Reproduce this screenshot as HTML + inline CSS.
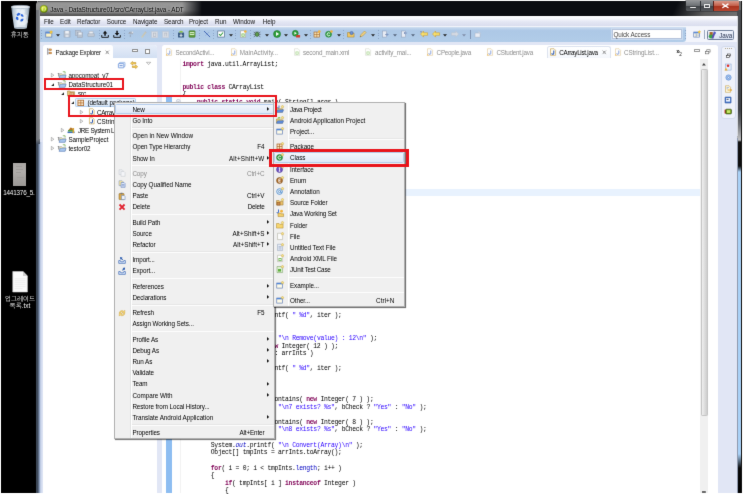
<!DOCTYPE html>
<html><head><meta charset="utf-8"><title>Java - DataStructure01/src/CArrayList.java - ADT</title>
<style>
html,body{margin:0;padding:0}
body{width:743px;height:494px;overflow:hidden;background:#fff;position:relative;font-family:"Liberation Sans","NanumGothic",sans-serif;}
div,span,svg{position:absolute}
svg{overflow:visible}
#root{left:0;top:0;width:743px;height:494px;overflow:hidden;background:#fff;filter:url(#soft)}
.t{white-space:pre;line-height:10px;height:10px;letter-spacing:-.08px}
.c{white-space:pre;line-height:10px;height:10px;font-family:"Liberation Mono",monospace;font-size:6.4px;letter-spacing:-0.30px;color:#000}
.c b,.c i,.c u,.c em{position:static;text-decoration:none}
.c b{color:#7f0055;font-weight:bold}
.c i{color:#2a00ff;font-style:normal}
.c u{color:#0000c0}
.c em{color:#0000c0;font-style:italic}
</style></head><body>
<svg width="0" height="0" style="position:absolute"><defs><filter id="soft" x="0" y="0" width="100%" height="100%" color-interpolation-filters="sRGB"><feConvolveMatrix order="3" kernelMatrix="0.0064 0.0672 0.0064 0.0672 0.7056 0.0672 0.0064 0.0672 0.0064" edgeMode="duplicate" preserveAlpha="true"/></filter></defs></svg>
<div id="root">
<div style="left:1.00px;top:1.00px;width:36.00px;height:492.00px;background:#000"></div>
<svg style="left:10.00px;top:4.00px;" width="21" height="26" viewBox="0 0 21 26"><defs><linearGradient id="rb" x1="0" x2="1"><stop offset="0" stop-color="#5f6d7a"/><stop offset=".12" stop-color="#b9c8d6"/><stop offset=".35" stop-color="#e6eef6"/><stop offset=".7" stop-color="#dbe5ee"/><stop offset=".9" stop-color="#a9b8c6"/><stop offset="1" stop-color="#55626e"/></linearGradient></defs>
<path d="M1.100 3h18.800l-3 20.800q-6.400 1.700-12.800 0z" fill="url(#rb)"/>
<ellipse cx="10.500" cy="3" rx="9.400" ry="1.600" fill="#eef3f8" stroke="#aebccb" stroke-width=".7"/>
<ellipse cx="10.500" cy="24" rx="6.300" ry="1.100" fill="#9eacb9"/>
<path d="M12 5l3 2-1 3 3 1-1 4 2 3-3 3H9l-2-4 2-3-2-4 3-2z" fill="#f4f8fc" opacity=".55"/>
<path d="M6.500 10.500l1.800-1.800 2.200.8-1 1.800-2.200.7zM10.800 10l2 .4 1 2-1.800.4-1.300-1.200zM13.600 14.800l-.7 2.200-2.200.8-.4-1.700 1.600-1.300zM6.200 12.800l1.800.2.600 2.400-1.500.9-1.300-1.700z" fill="#2c66dc"/></svg>
<span class="t" style="left:10.80px;top:30.40px;font-size:6.4px;color:#f0f0f0;;letter-spacing:0.023px">휴지통</span>
<div style="left:13.00px;top:163.00px;width:13.10px;height:22.90px;background:linear-gradient(180deg,#a9a6a3,#b0adaa 40%,#a3a09d 75%,#9b9895)"></div>
<div style="left:15.50px;top:166.00px;width:6.00px;height:0.50px;background:#9f9c99"></div>
<div style="left:15.50px;top:169.00px;width:7.50px;height:0.50px;background:#a09d9a"></div>
<div style="left:15.50px;top:172.00px;width:5.00px;height:0.50px;background:#a09d9a"></div>
<div style="left:17.00px;top:177.00px;width:6.50px;height:0.50px;background:#a09d9a"></div>
<span class="t" style="left:3.20px;top:188.10px;font-size:6.3px;color:#f4f4f4;;letter-spacing:-0.178px">1441376_5.</span>
<svg style="left:12.10px;top:271.10px;" width="16.2" height="21.5" viewBox="0 0 16 22"><path d="M.5.500h10.500l4.500 4.500V21.500H.5z" fill="#fbfbfb" stroke="#cfcfcf" stroke-width=".6"/><path d="M11 .5v4.500h4.500z" fill="#d0d0d0"/><path d="M2.500 8h11M2.500 10h11M2.500 12h11M2.500 14h11M2.500 16h11M2.500 18h8" stroke="#e2e2e2" stroke-width=".5"/></svg>
<span class="t" style="left:5.00px;top:294.00px;font-size:6.4px;color:#f4f4f4;;letter-spacing:-0.009px">업그레이드</span>
<span class="t" style="left:9.60px;top:301.20px;font-size:6.4px;color:#f4f4f4;;letter-spacing:0.042px">목록.txt</span>
<div style="left:36.00px;top:1.30px;width:706.00px;height:14.60px;background:#0a0c11;border-top-left-radius:3.500px;border-top-right-radius:3.500px"></div>
<div style="left:36.00px;top:1.30px;width:166.00px;height:14.60px;background:linear-gradient(180deg,#3a3a3a 0,#8c8c8c 9%,#989898 20%,#8e8e8e 62%,#6c6c6c 80%,#4c4c4c 100%);-webkit-mask-image:linear-gradient(90deg,#000 0,#000 88%,transparent 100%);border-top-left-radius:3.500px"></div>
<div style="left:648.00px;top:1.30px;width:94.00px;height:14.60px;background:linear-gradient(115deg,rgba(110,110,110,0) 0,rgba(110,110,110,0) 30%,#5c5c5c 62%,#727272 100%);border-top-right-radius:3.500px"></div>
<div style="left:36.00px;top:10.00px;width:4.00px;height:133.00px;background:linear-gradient(90deg,#6f7277 0,#777a7f 60%,#9ea1a6 100%)"></div>
<div style="left:36.00px;top:142.00px;width:4.00px;height:351.00px;background:linear-gradient(90deg,#3a4554 0,#404b5b 50%,#7486a4 72%,#a3b4d2 100%)"></div>
<div style="left:36.00px;top:139.00px;width:4.00px;height:5.00px;background:linear-gradient(180deg,#777a7f,#3f4a5a)"></div>
<div style="left:737.20px;top:10.00px;width:4.80px;height:483.00px;background:linear-gradient(180deg,#4a4d51 0,#3f4246 100px,#6a6c70 114px,#a2a3a6 124px,#c0c1c3 130px,#111 132px,#0c0c0c 156px,#a9d1f7 162px,#a9d1f7 444px,#0a0a0a 458px,#000 483px)"></div>
<div style="left:736.90px;top:16.00px;width:0.90px;height:120.00px;background:#d6d9df"></div>
<div style="left:736.50px;top:138.00px;width:0.80px;height:355.00px;background:#8f9aaf"></div>
<div style="left:741.20px;top:1.00px;width:0.90px;height:492.00px;background:#111"></div>
<svg style="left:40.20px;top:4.60px;" width="7.8" height="7.8" viewBox="0 0 16 16"><defs><radialGradient id="ag" cx=".4" cy=".35" r=".7"><stop offset="0" stop-color="#e6f04a"/><stop offset=".6" stop-color="#a8c81a"/><stop offset="1" stop-color="#5f7f0a"/></radialGradient></defs><circle cx="8" cy="8" r="7.600" fill="url(#ag)" stroke="#4a5f0a" stroke-width=".8"/><path d="M6.500 4c-1.500 0-1 3-2.500 4 1.500 1 1 4 2.500 4M9.500 4c1.500 0 1 3 2.500 4-1.500 1-1 4-2.500 4" fill="none" stroke="#fff" stroke-width="1.300"/></svg>
<span class="t" style="left:50.30px;top:4.50px;font-size:6.3px;color:#000;text-shadow:0 0 2px #c4c4c4,0 0 3px #b4b4b4,0 0 4px #a4a4a4">Java - DataStructure01/src/CArrayList.java - ADT</span>
<div style="left:685.80px;top:1.30px;width:52.30px;height:9.30px;border-radius:0 0 2.500px 2.500px;background:#6d7074;box-shadow:0 0 0 .6px #2a2c30"></div>
<div style="left:685.80px;top:1.30px;width:14.60px;height:9.30px;border-radius:0 0 0 2.500px;background:linear-gradient(180deg,#8e9194 0,#6e7175 45%,#3f4246 50%,#55585c 100%)"></div>
<div style="left:700.40px;top:1.30px;width:13.00px;height:9.30px;background:linear-gradient(180deg,#8e9194 0,#6e7175 45%,#3f4246 50%,#55585c 100%);border-left:.6px solid #2f3135"></div>
<div style="left:713.40px;top:1.30px;width:24.70px;height:9.30px;border-radius:0 0 2.500px 0;background:linear-gradient(180deg,#d99a8a 0,#c4614c 45%,#a8331e 50%,#b9452e 100%);border-left:.6px solid #5a2018"></div>
<div style="left:689.80px;top:6.60px;width:6.20px;height:1.90px;background:#f4f4f4;border-radius:.5px;box-shadow:0 0 .8px #222"></div>
<div style="left:704.20px;top:3.80px;width:5.60px;height:4.20px;border:1.100px solid #f4f4f4;border-radius:.5px;box-sizing:border-box;box-shadow:0 0 .8px #222"></div>
<svg style="left:722.20px;top:3.20px;" width="6.8" height="5.6" viewBox="0 0 12 8"><path d="M1.500 1l9 6M10.500 1l-9 6" stroke="#fff" stroke-width="2.600" stroke-linecap="round"/></svg>
<div style="left:39.70px;top:15.80px;width:697.60px;height:477.20px;background:#e1e6f5"></div>
<div style="left:40.00px;top:142.00px;width:3.00px;height:351.00px;background:linear-gradient(90deg,#b7c5df,#d3dcef 50%,#e1e6f5)"></div>
<div style="left:39.70px;top:15.60px;width:697.60px;height:10.20px;background:linear-gradient(180deg,#fdfdff 0,#f6f7fc 25%,#e3e6f3 60%,#d9ddee 100%)"></div>
<span class="t" style="left:43.90px;top:17.20px;font-size:6.3px;color:#111;">File</span>
<span class="t" style="left:60.10px;top:17.20px;font-size:6.3px;color:#111;">Edit</span>
<span class="t" style="left:77.10px;top:17.20px;font-size:6.3px;color:#111;">Refactor</span>
<span class="t" style="left:106.80px;top:17.20px;font-size:6.3px;color:#111;">Source</span>
<span class="t" style="left:133.10px;top:17.20px;font-size:6.3px;color:#111;">Navigate</span>
<span class="t" style="left:164.00px;top:17.20px;font-size:6.3px;color:#111;">Search</span>
<span class="t" style="left:188.90px;top:17.20px;font-size:6.3px;color:#111;">Project</span>
<span class="t" style="left:215.10px;top:17.20px;font-size:6.3px;color:#111;">Run</span>
<span class="t" style="left:233.10px;top:17.20px;font-size:6.3px;color:#111;">Window</span>
<span class="t" style="left:262.70px;top:17.20px;font-size:6.3px;color:#111;">Help</span>
<div style="left:39.70px;top:25.80px;width:697.60px;height:16.40px;background:#f3f5fc"></div>
<div style="left:39.70px;top:25.80px;width:646.60px;height:16.40px;background:linear-gradient(180deg,#e3ecf7 0,#bcd2eb 16%,#adc8e6 30%,#b1cce8 100%);border-bottom-right-radius:3px"></div>
<div style="left:39.70px;top:25.50px;width:697.60px;height:0.80px;background:#f1f4fa"></div>
<div style="left:41.20px;top:30.30px;width:0.80px;height:1.00px;background:#8ea6c8"></div>
<div style="left:41.20px;top:32.70px;width:0.80px;height:1.00px;background:#8ea6c8"></div>
<div style="left:41.20px;top:35.10px;width:0.80px;height:1.00px;background:#8ea6c8"></div>
<div style="left:41.20px;top:37.50px;width:0.80px;height:1.00px;background:#8ea6c8"></div>
<svg style="left:44.75px;top:30.45px;" width="8.1" height="8.1" viewBox="0 0 16 16"><rect x="1.5" y="4" width="12" height="10" fill="#fdf3c4" stroke="#5b79b5" stroke-width="1.4"/><rect x="1.5" y="4" width="12" height="3" fill="#5b8bd8"/><path d="M12 0l1.2 2.6 2.8.4-2 2 .5 2.8L12 6.5 9.5 7.8l.5-2.8-2-2 2.8-.4z" fill="#f5c43a"/></svg>
<svg style="left:54.20px;top:30.60px;" width="8" height="8" viewBox="0 0 16 16"><path d="M4 6.5h8l-4 4.5z" fill="#222"/></svg>
<svg style="left:63.45px;top:30.45px;" width="8.1" height="8.1" viewBox="0 0 16 16"><rect x="2" y="2" width="12" height="12" fill="#b9c2cf" stroke="#9aa5b6"/><rect x="4.5" y="2" width="7" height="5" fill="#eef1f5"/><rect x="5" y="9.5" width="6" height="4.5" fill="#dde2e9"/></svg>
<svg style="left:75.35px;top:30.45px;" width="8.1" height="8.1" viewBox="0 0 16 16"><rect x="1" y="1" width="10" height="10" fill="#bcc5d1" stroke="#9aa5b6"/><rect x="5" y="5" width="10" height="10" fill="#b9c2cf" stroke="#9aa5b6"/><rect x="7" y="5" width="6" height="4" fill="#eef1f5"/></svg>
<svg style="left:87.25px;top:30.45px;" width="8.1" height="8.1" viewBox="0 0 16 16"><rect x="1.5" y="7" width="13" height="6" rx="1" fill="#c2cad5" stroke="#9aa5b6"/><rect x="4" y="2.5" width="8" height="5" fill="#eceff4" stroke="#a9b2c0"/></svg>
<div style="left:98.80px;top:30.30px;width:0.80px;height:1.00px;background:#8ea6c8"></div>
<div style="left:98.80px;top:32.70px;width:0.80px;height:1.00px;background:#8ea6c8"></div>
<div style="left:98.80px;top:35.10px;width:0.80px;height:1.00px;background:#8ea6c8"></div>
<div style="left:98.80px;top:37.50px;width:0.80px;height:1.00px;background:#8ea6c8"></div>
<svg style="left:101.35px;top:30.45px;" width="8.1" height="8.1" viewBox="0 0 16 16"><path d="M8 1.5L3.5 7h3v4.5h3V7h3z" fill="#111"/><path d="M1.5 10v4.5h13V10" fill="none" stroke="#111" stroke-width="1.8"/></svg>
<svg style="left:112.85px;top:30.45px;" width="8.1" height="8.1" viewBox="0 0 16 16"><path d="M8 11.5L3.5 6h3V1.5h3V6h3z" fill="#111"/><path d="M1.5 10v4.5h13V10" fill="none" stroke="#111" stroke-width="1.8"/></svg>
<div style="left:123.90px;top:30.30px;width:0.80px;height:1.00px;background:#8ea6c8"></div>
<div style="left:123.90px;top:32.70px;width:0.80px;height:1.00px;background:#8ea6c8"></div>
<div style="left:123.90px;top:35.10px;width:0.80px;height:1.00px;background:#8ea6c8"></div>
<div style="left:123.90px;top:37.50px;width:0.80px;height:1.00px;background:#8ea6c8"></div>
<svg style="left:127.25px;top:30.45px;" width="8.1" height="8.1" viewBox="0 0 16 16"><path d="M2 8l4-5 7 1-2 5-5-1z" fill="#aab3c0"/><path d="M4 5l3 1M6.500 9v5" stroke="#8f99a8" stroke-width="1.400"/><circle cx="11" cy="4.500" r="1.600" fill="#e4e8ee"/></svg>
<svg style="left:139.75px;top:30.45px;" width="8.1" height="8.1" viewBox="0 0 16 16"><path d="M3 13l7-10 3 2-7 9z" fill="#c9c6b4"/><path d="M3 13.500l2.500 1" stroke="#d9cfa8" stroke-width="2"/><path d="M10 3l3 2" stroke="#b4b9c4" stroke-width="1.600"/></svg>
<svg style="left:150.70px;top:30.80px;" width="7.4" height="7.4" viewBox="0 0 16 16"><rect x="1.5" y="1.5" width="13" height="13" fill="#d9dde4" stroke="#c2c8d2"/><rect x="5.5" y="4.5" width="5" height="7" fill="none" stroke="#aeb5c1" stroke-width="1.3"/></svg>
<svg style="left:162.30px;top:30.80px;" width="7.4" height="7.4" viewBox="0 0 16 16"><rect x="1.5" y="1.5" width="13" height="13" fill="#d9dde4" stroke="#c2c8d2"/><path d="M6 4.5v7M10 4.5v7M5 4.5h6" fill="none" stroke="#aeb5c1" stroke-width="1.3"/></svg>
<div style="left:173.00px;top:30.30px;width:0.80px;height:1.00px;background:#8ea6c8"></div>
<div style="left:173.00px;top:32.70px;width:0.80px;height:1.00px;background:#8ea6c8"></div>
<div style="left:173.00px;top:35.10px;width:0.80px;height:1.00px;background:#8ea6c8"></div>
<div style="left:173.00px;top:37.50px;width:0.80px;height:1.00px;background:#8ea6c8"></div>
<svg style="left:176.55px;top:30.45px;" width="8.1" height="8.1" viewBox="0 0 16 16"><rect x="2" y="5" width="12" height="10" rx="1" fill="#3b5d84"/><path d="M4 5a4 3.6 0 0 1 8 0z" fill="#8fc44a"/><path d="M8 7v5M5.5 10L8 12.8 10.5 10" fill="none" stroke="#fff" stroke-width="1.8"/></svg>
<svg style="left:188.45px;top:30.45px;" width="8.1" height="8.1" viewBox="0 0 16 16"><rect x="2" y="1.5" width="12" height="13" rx="1.5" fill="#5e9b3a" stroke="#3c6e25"/><rect x="3.5" y="4" width="9" height="6" fill="#d7ecc6"/><rect x="4.5" y="6" width="7" height="1.6" fill="#5e9b3a"/></svg>
<div style="left:199.40px;top:30.30px;width:0.80px;height:1.00px;background:#8ea6c8"></div>
<div style="left:199.40px;top:32.70px;width:0.80px;height:1.00px;background:#8ea6c8"></div>
<div style="left:199.40px;top:35.10px;width:0.80px;height:1.00px;background:#8ea6c8"></div>
<div style="left:199.40px;top:37.50px;width:0.80px;height:1.00px;background:#8ea6c8"></div>
<svg style="left:202.95px;top:30.45px;" width="8.1" height="8.1" viewBox="0 0 16 16"><path d="M2 2l12 12" stroke="#2a4fa8" stroke-width="1.6"/><path d="M5 11l7-7" stroke="#7fa0dc" stroke-width="1.3"/></svg>
<div style="left:213.10px;top:30.30px;width:0.80px;height:1.00px;background:#8ea6c8"></div>
<div style="left:213.10px;top:32.70px;width:0.80px;height:1.00px;background:#8ea6c8"></div>
<div style="left:213.10px;top:35.10px;width:0.80px;height:1.00px;background:#8ea6c8"></div>
<div style="left:213.10px;top:37.50px;width:0.80px;height:1.00px;background:#8ea6c8"></div>
<svg style="left:217.15px;top:30.45px;" width="8.1" height="8.1" viewBox="0 0 16 16"><rect x="1.5" y="2" width="13" height="12" fill="#fff" stroke="#54708f" stroke-width="1.4"/><path d="M4 8l3 3 5-6" fill="none" stroke="#2e9a3a" stroke-width="2"/></svg>
<svg style="left:226.70px;top:30.60px;" width="8" height="8" viewBox="0 0 16 16"><path d="M4 6.5h8l-4 4.5z" fill="#222"/></svg>
<div style="left:235.00px;top:30.30px;width:0.80px;height:1.00px;background:#8ea6c8"></div>
<div style="left:235.00px;top:32.70px;width:0.80px;height:1.00px;background:#8ea6c8"></div>
<div style="left:235.00px;top:35.10px;width:0.80px;height:1.00px;background:#8ea6c8"></div>
<div style="left:235.00px;top:37.50px;width:0.80px;height:1.00px;background:#8ea6c8"></div>
<svg style="left:239.25px;top:30.45px;" width="8.1" height="8.1" viewBox="0 0 16 16"><path d="M3 1.5h7l3 3V14.5H3z" fill="#fff" stroke="#9a9a8a"/><rect x="5" y="7" width="6" height="6" fill="#6fb648"/><rect x="6.5" y="8.5" width="3" height="3" fill="#fff"/><circle cx="12.5" cy="3" r="2.6" fill="#f3b33c"/></svg>
<div style="left:249.50px;top:30.30px;width:0.80px;height:1.00px;background:#8ea6c8"></div>
<div style="left:249.50px;top:32.70px;width:0.80px;height:1.00px;background:#8ea6c8"></div>
<div style="left:249.50px;top:35.10px;width:0.80px;height:1.00px;background:#8ea6c8"></div>
<div style="left:249.50px;top:37.50px;width:0.80px;height:1.00px;background:#8ea6c8"></div>
<svg style="left:253.45px;top:30.45px;" width="8.1" height="8.1" viewBox="0 0 16 16"><ellipse cx="8" cy="8.5" rx="3.6" ry="4.4" fill="#5d9a4a" stroke="#2e5a2a"/><path d="M1.5 4l3.5 2.5M14.5 4L11 6.5M1 8.5h3.5M15 8.5h-3.5M1.5 13.5L5 11M14.5 13.5L11 11M6 3l1 1.5M10 3L9 4.5" stroke="#333" stroke-width="1.1"/></svg>
<svg style="left:262.70px;top:30.60px;" width="8" height="8" viewBox="0 0 16 16"><path d="M4 6.5h8l-4 4.5z" fill="#222"/></svg>
<svg style="left:272.55px;top:30.45px;" width="8.1" height="8.1" viewBox="0 0 16 16"><circle cx="8" cy="8" r="7" fill="#2f9e3a" stroke="#1c6e28"/><path d="M6 4l6 4-6 4z" fill="#fff"/></svg>
<svg style="left:282.20px;top:30.60px;" width="8" height="8" viewBox="0 0 16 16"><path d="M4 6.5h8l-4 4.5z" fill="#222"/></svg>
<svg style="left:292.15px;top:30.45px;" width="8.1" height="8.1" viewBox="0 0 16 16"><circle cx="6.5" cy="6.5" r="5.8" fill="#2f9e3a" stroke="#1c6e28"/><path d="M4.8 3.5l4.6 3-4.6 3z" fill="#fff"/><rect x="8" y="10" width="8" height="5" rx="1" fill="#d23b2a"/></svg>
<svg style="left:301.50px;top:30.60px;" width="8" height="8" viewBox="0 0 16 16"><path d="M4 6.5h8l-4 4.5z" fill="#222"/></svg>
<div style="left:310.10px;top:30.30px;width:0.80px;height:1.00px;background:#8ea6c8"></div>
<div style="left:310.10px;top:32.70px;width:0.80px;height:1.00px;background:#8ea6c8"></div>
<div style="left:310.10px;top:35.10px;width:0.80px;height:1.00px;background:#8ea6c8"></div>
<div style="left:310.10px;top:37.50px;width:0.80px;height:1.00px;background:#8ea6c8"></div>
<svg style="left:313.45px;top:30.45px;" width="8.1" height="8.1" viewBox="0 0 16 16"><rect x="2" y="4" width="11" height="10" fill="#f6dfb0" stroke="#a86a2a" stroke-width="1.3"/><path d="M7.5 4v10M2 9h11" stroke="#a86a2a" stroke-width="1.2"/><circle cx="12.5" cy="3.2" r="2.6" fill="#f3b33c"/></svg>
<svg style="left:325.25px;top:30.45px;" width="8.1" height="8.1" viewBox="0 0 16 16"><circle cx="7" cy="8.5" r="6" fill="#3aa34a" stroke="#1f7a30"/><path d="M9.6 6.6a3 3 0 1 0 0 3.8" fill="none" stroke="#fff" stroke-width="1.7"/><circle cx="12.8" cy="3" r="2.5" fill="#f3b33c"/></svg>
<svg style="left:334.80px;top:30.60px;" width="8" height="8" viewBox="0 0 16 16"><path d="M4 6.5h8l-4 4.5z" fill="#222"/></svg>
<div style="left:343.40px;top:30.30px;width:0.80px;height:1.00px;background:#8ea6c8"></div>
<div style="left:343.40px;top:32.70px;width:0.80px;height:1.00px;background:#8ea6c8"></div>
<div style="left:343.40px;top:35.10px;width:0.80px;height:1.00px;background:#8ea6c8"></div>
<div style="left:343.40px;top:37.50px;width:0.80px;height:1.00px;background:#8ea6c8"></div>
<svg style="left:347.25px;top:30.45px;" width="8.1" height="8.1" viewBox="0 0 16 16"><path d="M1 5h5l1.5 1.5H14V14H1z" fill="#f0c765" stroke="#a8812a"/><circle cx="9" cy="6" r="3.2" fill="#6d8fd0" stroke="#3d5fa0"/></svg>
<svg style="left:359.35px;top:30.45px;" width="8.1" height="8.1" viewBox="0 0 16 16"><path d="M2 14l2-5 7-7 3 3-7 7z" fill="#f0d080" stroke="#b08a30"/><path d="M2 14l2-1-1-1z" fill="#444"/></svg>
<svg style="left:368.70px;top:30.60px;" width="8" height="8" viewBox="0 0 16 16"><path d="M4 6.5h8l-4 4.5z" fill="#222"/></svg>
<div style="left:377.60px;top:30.30px;width:0.80px;height:1.00px;background:#8ea6c8"></div>
<div style="left:377.60px;top:32.70px;width:0.80px;height:1.00px;background:#8ea6c8"></div>
<div style="left:377.60px;top:35.10px;width:0.80px;height:1.00px;background:#8ea6c8"></div>
<div style="left:377.60px;top:37.50px;width:0.80px;height:1.00px;background:#8ea6c8"></div>
<svg style="left:381.15px;top:30.45px;" width="8.1" height="8.1" viewBox="0 0 16 16"><rect x="3" y="2" width="8" height="12" fill="#e8ecf4" stroke="#8d9bb5"/><path d="M8 9h6M11.5 6.5L14 9l-2.500 2.500" fill="none" stroke="#6d86b8" stroke-width="1.4"/></svg>
<svg style="left:390.60px;top:30.60px;" width="8" height="8" viewBox="0 0 16 16"><path d="M4 6.500h8l-4 4.500z" fill="#56647c"/></svg>
<svg style="left:400.45px;top:30.45px;" width="8.1" height="8.1" viewBox="0 0 16 16"><rect x="3" y="2" width="8" height="12" fill="#e8ecf4" stroke="#8d9bb5"/><path d="M14 6H8M10.5 3.500L8 6l2.500 2.500" fill="none" stroke="#6d86b8" stroke-width="1.4"/></svg>
<svg style="left:409.40px;top:30.60px;" width="8" height="8" viewBox="0 0 16 16"><path d="M4 6.500h8l-4 4.500z" fill="#56647c"/></svg>
<svg style="left:419.55px;top:30.45px;" width="8.1" height="8.1" viewBox="0 0 16 16"><path d="M1 8l6-6v3.500h8v5H7V14z" fill="#f9e06c" stroke="#c8962a"/><path d="M2 2v3M.5 3.500h3" stroke="#5a6a90" stroke-width=".8"/></svg>
<svg style="left:431.55px;top:30.45px;" width="8.1" height="8.1" viewBox="0 0 16 16"><path d="M1 8l6-6v3.500h8v5H7V14z" fill="#f9e06c" stroke="#c8962a"/></svg>
<svg style="left:440.70px;top:30.60px;" width="8" height="8" viewBox="0 0 16 16"><path d="M4 6.5h8l-4 4.5z" fill="#222"/></svg>
<svg style="left:450.95px;top:30.45px;" width="8.1" height="8.1" viewBox="0 0 16 16"><path d="M15 8L9 2v3.500H1v5h8V14z" fill="#d6dbe4" stroke="#bcc3cf"/></svg>
<svg style="left:460.20px;top:30.60px;" width="8" height="8" viewBox="0 0 16 16"><path d="M4 6.500h8l-4 4.500z" fill="#7f8da8"/></svg>
<div style="left:469.50px;top:29.80px;width:0.70px;height:9.60px;background:#7f93b3"></div>
<svg style="left:473.75px;top:30.45px;" width="8.1" height="8.1" viewBox="0 0 16 16"><rect x="2" y="6" width="10" height="8" fill="#e9edf5" stroke="#aab3c4"/><path d="M9 2l5 5-3 0-3-3z" fill="#c7cedb"/></svg>
<div style="left:611.50px;top:29.40px;width:70.20px;height:9.80px;background:#fff;border:.7px solid #b5c4dc;box-sizing:border-box;box-shadow:0 0 0 1px #c9daef"></div>
<span class="t" style="left:613.40px;top:30.10px;font-size:6.3px;color:#444;">Quick Access</span>
<div style="left:684.50px;top:30.30px;width:0.80px;height:1.00px;background:#8ea6c8"></div>
<div style="left:684.50px;top:32.70px;width:0.80px;height:1.00px;background:#8ea6c8"></div>
<div style="left:684.50px;top:35.10px;width:0.80px;height:1.00px;background:#8ea6c8"></div>
<div style="left:684.50px;top:37.50px;width:0.80px;height:1.00px;background:#8ea6c8"></div>
<svg style="left:692.85px;top:30.45px;" width="8.1" height="8.1" viewBox="0 0 16 16"><rect x="1.5" y="4" width="11" height="10" fill="#fffbe6" stroke="#5b79b5" stroke-width="1.3"/><rect x="1.5" y="4" width="11" height="2.600" fill="#5b8bd8"/><path d="M6 6.500v7.500M6 10h6.500" stroke="#5b79b5"/><path d="M12.500 0l1.100 2.300 2.400.4-1.800 1.800.4 2.500-2.100-1.200-2.200 1.200.4-2.500L9 2.700l2.400-.4z" fill="#f5c43a"/></svg>
<div style="left:703.60px;top:30.00px;width:0.70px;height:9.40px;background:#9aa6bd"></div>
<div style="left:706.60px;top:29.90px;width:27.00px;height:10.10px;border:.8px solid #6f7f9a;border-radius:1.500px;box-sizing:border-box;background:linear-gradient(180deg,#eef2fb,#d9e2f3)"></div>
<svg style="left:708.30px;top:30.60px;" width="8.4" height="8.4" viewBox="0 0 16 16"><circle cx="6" cy="10" r="4.500" fill="#3aa34a"/><rect x="3" y="2" width="6" height="5" fill="#a8632a"/><path d="M11 1l4 1-5 13-3-1z" fill="#5e4bb4"/><path d="M12 2.500c2 0 2.500 2 1 4" fill="none" stroke="#3b6fd0" stroke-width="1.600"/></svg>
<span class="t" style="left:719.30px;top:30.50px;font-size:6.3px;color:#2a3550;">Java</span>
<div style="left:43.00px;top:45.00px;width:114.00px;height:448.00px;background:#fff;border-radius:2.5px 2.5px 0 0"></div>
<div style="left:43.00px;top:45.00px;width:114.00px;height:13.00px;background:linear-gradient(180deg,#e6edf9,#d2dff2);border-radius:2.5px 2.5px 0 0"></div>
<div style="left:43.00px;top:45.00px;width:70.00px;height:13.00px;background:#fff;border-radius:2.5px 2.5px 0 0"></div>
<svg style="left:47.00px;top:48.30px;" width="5.2" height="6.8" viewBox="0 0 11 15"><path d="M1.500 0v15" stroke="#4a4a5a" stroke-width="1.400"/><path d="M1.500 4h3M1.500 11h3" stroke="#4a4a5a" stroke-width="1"/><rect x="4.500" y="2" width="5.500" height="4" fill="#d9a05a" stroke="#a8682a" stroke-width=".8"/><rect x="4.500" y="9" width="5.500" height="4" fill="#d9a05a" stroke="#a8682a" stroke-width=".8"/></svg>
<span class="t" style="left:55.60px;top:47.50px;font-size:6.3px;color:#111;;letter-spacing:-0.275px">Package Explorer</span>
<svg style="left:105.00px;top:49.50px;" width="4.6" height="4.6" viewBox="0 0 10 10"><path d="M1 1l2.500 2.500h3L9 1M1 9l2.500-2.500h3L9 9M3.500 3.500v3M6.500 3.500v3" fill="none" stroke="#555" stroke-width="1"/></svg>
<div style="left:132.40px;top:49.40px;width:6.00px;height:2.30px;border:.5px solid #8c8c8c;box-sizing:border-box;background:#fff;border-radius:.5px"></div>
<div style="left:144.50px;top:49.10px;width:5.50px;height:5.00px;border:.5px solid #8c8c8c;border-top-width:.9px;box-sizing:border-box;background:#fff"></div>
<svg style="left:118.40px;top:62.20px;" width="7.6" height="6.4" viewBox="0 0 12.5 10.5"><rect x="2.500" y=".6" width="9" height="7" rx=".8" fill="#f4f8ff" stroke="#6f98d8" stroke-width="1"/><rect x=".6" y="2.600" width="9" height="7" rx=".8" fill="#f4f8ff" stroke="#4f7fd0" stroke-width="1.100"/><path d="M2.600 6h5" stroke="#3f6fc0" stroke-width="1.200"/></svg>
<svg style="left:130.40px;top:61.00px;" width="8.2" height="8" viewBox="0 0 16 16"><path d="M5 .8L.8 4.500 5 8.200V6h6.500V3H5z" fill="#f5cf5a" stroke="#b8861a" stroke-width="1"/><path d="M11 7.800l4.200 3.700-4.200 3.700V13H4.500v-3H11z" fill="#f5cf5a" stroke="#b8861a" stroke-width="1"/></svg>
<svg style="left:146.30px;top:61.50px;" width="5.2" height="3" viewBox="0 0 10 6"><path d="M.8.600h8.400L5 5.200z" fill="#fff" stroke="#6f6f6f" stroke-width=".9"/></svg>
<div style="left:75.30px;top:98.20px;width:61.00px;height:8.80px;background:linear-gradient(180deg,#eef5fd,#dbe9fa);border:.5px solid #b4cfee;border-radius:1.200px;box-sizing:border-box"></div>
<svg style="left:50.80px;top:72.90px;" width="3.2" height="4.4" viewBox="0 0 6 8"><path d="M.6.600L5.400 4 .6 7.400z" fill="#fff" stroke="#8a8a8a" stroke-width="1.100"/></svg>
<svg style="left:57.75px;top:71.05px;" width="8.1" height="8.1" viewBox="0 0 16 16"><path d="M3 5h4l1.500 1.500H15V14H3z" fill="#f6e6a8" stroke="#8a9ab8" stroke-width=".9"/><path d="M4.500 8.500H16l-2.500 6H2z" fill="#a9c8f0" stroke="#4f78b8" stroke-width="1"/><path d="M9.500 1.500h4.500v3.500" fill="none" stroke="#6faa4f" stroke-width="1.500"/><path d="M1.200 4v7M0 5.200l1.200-1.200" stroke="#444" stroke-width="1.100" fill="none"/></svg>
<span class="t" style="left:68.40px;top:71.00px;font-size:6.3px;color:#000;">appcompat_v7</span>
<svg style="left:50.70px;top:82.95px;" width="3.2" height="3.2" viewBox="0 0 8 8"><path d="M7.500.5v7h-7z" fill="#2a2a2a"/></svg>
<svg style="left:57.75px;top:80.20px;" width="8.1" height="8.1" viewBox="0 0 16 16"><path d="M3 5h4l1.500 1.500H15V14H3z" fill="#f6e6a8" stroke="#8a9ab8" stroke-width=".9"/><path d="M4.500 8.500H16l-2.500 6H2z" fill="#a9c8f0" stroke="#4f78b8" stroke-width="1"/><path d="M9.500 1.500h4.500v3.500" fill="none" stroke="#6faa4f" stroke-width="1.500"/><path d="M1.200 4v7M0 5.200l1.200-1.200" stroke="#444" stroke-width="1.100" fill="none"/></svg>
<span class="t" style="left:68.40px;top:80.15px;font-size:6.3px;color:#000;">DataStructure01</span>
<svg style="left:60.70px;top:92.10px;" width="3.2" height="3.2" viewBox="0 0 8 8"><path d="M7.500.5v7h-7z" fill="#2a2a2a"/></svg>
<svg style="left:66.95px;top:89.35px;" width="8.1" height="8.1" viewBox="0 0 16 16"><path d="M1 4h5l1.500 1.500H15V14H1z" fill="#e9c77a" stroke="#9a7a3a"/><rect x="6" y="7" width="7" height="6" fill="#f8ecd0" stroke="#a86a2a"/><path d="M9.500 7v6M6 10h7" stroke="#a86a2a"/></svg>
<span class="t" style="left:77.90px;top:89.30px;font-size:6.3px;color:#000;">src</span>
<svg style="left:71.10px;top:101.25px;" width="3.2" height="3.2" viewBox="0 0 8 8"><path d="M7.500.5v7h-7z" fill="#2a2a2a"/></svg>
<svg style="left:76.90px;top:98.75px;" width="7.6" height="7.6" viewBox="0 0 16 16"><rect x="2" y="2.500" width="12" height="11.500" fill="#fbe9c8" stroke="#a85f22" stroke-width="1.500"/><path d="M8 2.500V14M2 8.200h12" stroke="#a85f22" stroke-width="1.400"/></svg>
<span class="t" style="left:87.40px;top:98.45px;font-size:6.3px;color:#000;">(default package)</span>
<svg style="left:80.20px;top:109.50px;" width="3.2" height="4.4" viewBox="0 0 6 8"><path d="M.6.600L5.400 4 .6 7.400z" fill="#fff" stroke="#8a8a8a" stroke-width="1.100"/></svg>
<svg style="left:87.50px;top:107.90px;" width="7.6" height="7.6" viewBox="0 0 16 16"><path d="M3 1.500h7l3 3V14.500H3z" fill="#fffdf6" stroke="#c09a40" stroke-width="1.200"/><path d="M9.500 5v5.500a2 2 0 0 1-4 0" fill="none" stroke="#1f4fb0" stroke-width="2"/></svg>
<span class="t" style="left:96.90px;top:107.60px;font-size:6.3px;color:#000;;letter-spacing:-0.286px">CArrayList.java</span>
<svg style="left:80.20px;top:118.65px;" width="3.2" height="4.4" viewBox="0 0 6 8"><path d="M.6.600L5.400 4 .6 7.400z" fill="#fff" stroke="#8a8a8a" stroke-width="1.100"/></svg>
<svg style="left:87.50px;top:117.05px;" width="7.6" height="7.6" viewBox="0 0 16 16"><path d="M3 1.500h7l3 3V14.500H3z" fill="#fffdf6" stroke="#c09a40" stroke-width="1.200"/><path d="M9.500 5v5.500a2 2 0 0 1-4 0" fill="none" stroke="#1f4fb0" stroke-width="2"/></svg>
<span class="t" style="left:96.90px;top:116.75px;font-size:6.3px;color:#000;;letter-spacing:0.020px">CStringList.java</span>
<svg style="left:60.80px;top:127.80px;" width="3.2" height="4.4" viewBox="0 0 6 8"><path d="M.6.600L5.400 4 .6 7.400z" fill="#fff" stroke="#8a8a8a" stroke-width="1.100"/></svg>
<svg style="left:66.95px;top:125.95px;" width="8.1" height="8.1" viewBox="0 0 16 16"><rect x="1" y="11" width="14" height="3" fill="#3d6fc0"/><rect x="2" y="8" width="12" height="3" fill="#4f9a3f"/><path d="M3 8l4-5 3 1 4 4z" fill="#b5762a"/><rect x="11" y="4" width="3" height="10" fill="#d6a33a"/></svg>
<span class="t" style="left:78.00px;top:125.90px;font-size:6.3px;color:#000;;letter-spacing:-0.306px">JRE System Library [JavaSE-1.7]</span>
<svg style="left:50.80px;top:136.95px;" width="3.2" height="4.4" viewBox="0 0 6 8"><path d="M.6.600L5.400 4 .6 7.400z" fill="#fff" stroke="#8a8a8a" stroke-width="1.100"/></svg>
<svg style="left:57.75px;top:135.10px;" width="8.1" height="8.1" viewBox="0 0 16 16"><path d="M3 5h4l1.500 1.500H15V14H3z" fill="#f6e6a8" stroke="#8a9ab8" stroke-width=".9"/><path d="M4.500 8.500H16l-2.500 6H2z" fill="#a9c8f0" stroke="#4f78b8" stroke-width="1"/><path d="M9.500 1.500h4.500v3.500" fill="none" stroke="#6faa4f" stroke-width="1.500"/><path d="M1.200 4v7M0 5.200l1.200-1.200" stroke="#444" stroke-width="1.100" fill="none"/></svg>
<span class="t" style="left:68.40px;top:135.05px;font-size:6.3px;color:#000;">SampleProject</span>
<svg style="left:50.80px;top:146.10px;" width="3.2" height="4.4" viewBox="0 0 6 8"><path d="M.6.600L5.400 4 .6 7.400z" fill="#fff" stroke="#8a8a8a" stroke-width="1.100"/></svg>
<svg style="left:57.75px;top:144.25px;" width="8.1" height="8.1" viewBox="0 0 16 16"><path d="M3 5h4l1.500 1.500H15V14H3z" fill="#f6e6a8" stroke="#8a9ab8" stroke-width=".9"/><path d="M4.500 8.500H16l-2.500 6H2z" fill="#a9c8f0" stroke="#4f78b8" stroke-width="1"/><path d="M9.500 1.500h4.500v3.500" fill="none" stroke="#6faa4f" stroke-width="1.500"/><path d="M1.200 4v7M0 5.200l1.200-1.200" stroke="#444" stroke-width="1.100" fill="none"/></svg>
<span class="t" style="left:68.40px;top:144.20px;font-size:6.3px;color:#000;">testor02</span>
<div style="left:157.00px;top:43.00px;width:5.00px;height:450.00px;background:#e1e6f5"></div>
<div style="left:162.00px;top:45.00px;width:556.00px;height:448.00px;background:#fff;border-radius:2.5px 2.5px 0 0"></div>
<svg style="left:165.25px;top:47.55px;" width="8.1" height="8.1" viewBox="0 0 16 16"><path d="M3 1.500h7l3 3V14.500H3z" fill="#fff" stroke="#dcc08a"/><path d="M9.500 5v5.500a2 2 0 0 1-4 0" fill="none" stroke="#7f9ada" stroke-width="1.800"/><path d="M1.500 15l2-3.500 2 3.500z" fill="#f0c06a"/></svg>
<span class="t" style="left:175.40px;top:47.60px;font-size:6.3px;color:#8c8c8c;;letter-spacing:-0.204px">SecondActivi...</span>
<svg style="left:229.55px;top:47.55px;" width="8.1" height="8.1" viewBox="0 0 16 16"><path d="M3 1.500h7l3 3V14.500H3z" fill="#fff" stroke="#dcc08a"/><path d="M9.500 5v5.500a2 2 0 0 1-4 0" fill="none" stroke="#7f9ada" stroke-width="1.800"/><path d="M1.500 15l2-3.500 2 3.500z" fill="#f0c06a"/></svg>
<span class="t" style="left:239.80px;top:47.60px;font-size:6.3px;color:#8c8c8c;;letter-spacing:-0.005px">MainActivity...</span>
<svg style="left:292.95px;top:47.55px;" width="8.1" height="8.1" viewBox="0 0 16 16"><path d="M3 1.500h7l3 3V14.500H3z" fill="#fff" stroke="#cfd4c8"/><rect x="5" y="7" width="6" height="6" fill="#a8d68f"/><rect x="6.500" y="8.500" width="3" height="3" fill="#fff"/></svg>
<span class="t" style="left:303.10px;top:47.60px;font-size:6.3px;color:#8c8c8c;;letter-spacing:-0.193px">second_main.xml</span>
<svg style="left:363.95px;top:47.55px;" width="8.1" height="8.1" viewBox="0 0 16 16"><path d="M3 1.500h7l3 3V14.500H3z" fill="#fff" stroke="#cfd4c8"/><rect x="5" y="7" width="6" height="6" fill="#a8d68f"/><rect x="6.500" y="8.500" width="3" height="3" fill="#fff"/></svg>
<span class="t" style="left:375.00px;top:47.60px;font-size:6.3px;color:#8c8c8c;;letter-spacing:-0.124px">activity_mai...</span>
<svg style="left:425.65px;top:47.55px;" width="8.1" height="8.1" viewBox="0 0 16 16"><path d="M3 1.500h7l3 3V14.500H3z" fill="#fff" stroke="#dcc08a"/><path d="M9.500 5v5.500a2 2 0 0 1-4 0" fill="none" stroke="#7f9ada" stroke-width="1.800"/><path d="M1.500 15l2-3.500 2 3.500z" fill="#f0c06a"/></svg>
<span class="t" style="left:436.60px;top:47.60px;font-size:6.3px;color:#8c8c8c;;letter-spacing:-0.264px">CPeople.java</span>
<svg style="left:485.55px;top:47.55px;" width="8.1" height="8.1" viewBox="0 0 16 16"><path d="M3 1.500h7l3 3V14.500H3z" fill="#fff" stroke="#dcc08a"/><path d="M9.500 5v5.500a2 2 0 0 1-4 0" fill="none" stroke="#7f9ada" stroke-width="1.800"/><path d="M1.500 15l2-3.500 2 3.500z" fill="#f0c06a"/></svg>
<span class="t" style="left:496.40px;top:47.60px;font-size:6.3px;color:#8c8c8c;;letter-spacing:-0.228px">CStudent.java</span>
<div style="left:547.20px;top:46.20px;width:64.30px;height:12.00px;background:linear-gradient(180deg,#fff,#f4f7fc);border:.5px solid #dde3ef;border-bottom:none;border-radius:2.500px 2.500px 0 0;box-sizing:border-box"></div>
<svg style="left:549.05px;top:47.55px;" width="8.1" height="8.1" viewBox="0 0 16 16"><path d="M3 1.500h7l3 3V14.500H3z" fill="#fffdf6" stroke="#c09a40" stroke-width="1.200"/><path d="M9.500 5v5.500a2 2 0 0 1-4 0" fill="none" stroke="#1f4fb0" stroke-width="2"/></svg>
<span class="t" style="left:559.20px;top:47.60px;font-size:6.3px;color:#000;;letter-spacing:-0.274px">CArrayList.java</span>
<svg style="left:602.20px;top:49.70px;" width="4.6" height="4.6" viewBox="0 0 10 10"><path d="M1 1l2.500 2.500h3L9 1M1 9l2.500-2.500h3L9 9M3.500 3.500v3M6.500 3.500v3" fill="none" stroke="#555" stroke-width="1"/></svg>
<svg style="left:613.95px;top:47.55px;" width="8.1" height="8.1" viewBox="0 0 16 16"><path d="M3 1.500h7l3 3V14.500H3z" fill="#fff" stroke="#dcc08a"/><path d="M9.500 5v5.500a2 2 0 0 1-4 0" fill="none" stroke="#7f9ada" stroke-width="1.800"/><path d="M1.500 15l2-3.500 2 3.500z" fill="#f0c06a"/></svg>
<span class="t" style="left:624.00px;top:47.60px;font-size:6.3px;color:#8c8c8c;;letter-spacing:-0.089px">CStringList...</span>
<span class="t" style="left:676.20px;top:47.10px;font-size:6.5px;color:#222;font-weight:bold;letter-spacing:-1px">»</span>
<span class="t" style="left:679.20px;top:49.50px;font-size:4.6px;color:#222;">2</span>
<div style="left:693.70px;top:49.30px;width:6.20px;height:2.30px;border:.5px solid #9a9a9a;box-sizing:border-box;background:#fff;border-radius:.5px"></div>
<svg style="left:704.80px;top:49.00px;" width="5.6" height="5.6" viewBox="0 0 11 10"><rect x="3.500" y="1" width="6.500" height="4.500" fill="#fff" stroke="#666" stroke-width="1.200"/><rect x="1" y="4.500" width="6.500" height="4.500" fill="#fff" stroke="#666" stroke-width="1.200"/></svg>
<div style="left:166.10px;top:97.40px;width:6.00px;height:396.00px;background:#8dbdf1"></div>
<div style="left:180.20px;top:58.50px;width:0.50px;height:434.00px;background:#f2f2f2"></div>
<div style="left:181.00px;top:188.80px;width:519.00px;height:7.60px;background:#e8f2fe"></div>
<svg style="left:175.60px;top:98.80px;" width="4.6" height="4.6" viewBox="0 0 10 10"><circle cx="5" cy="5" r="4.200" fill="#fff" stroke="#8a9ab8" stroke-width="1"/><path d="M2.800 5h4.400" stroke="#6a7a98" stroke-width="1"/></svg>
<span class="c" style="left:182.50px;top:60px"><b>import</b> java.util.ArrayList;</span>
<span class="c" style="left:182.50px;top:83px"><b>public</b> <b>class</b> CArrayList</span>
<span class="c" style="left:182.50px;top:90px;height:6px;overflow:hidden">{</span>
<span class="c" style="left:196.66px;top:98px"><b>public</b> <b>static</b> <b>void</b> main( String[] args )</span>
<span class="c" style="left:196.66px;top:105px">{</span>
<span class="c" style="left:224.98px;top:311px">System.<em>out</em>.printf( <i>" %d"</i>, iter );</span>
<span class="c" style="left:210.82px;top:319px">}</span>
<span class="c" style="left:210.82px;top:334px">System.<em>out</em>.printf( <i>"\n Remove(value) : 12\n"</i> );</span>
<span class="c" style="left:210.82px;top:342px">arrInts.remove( <b>new</b> Integer( 12 ) );</span>
<span class="c" style="left:210.82px;top:349px"><b>for</b>( Integer iter : arrInts )</span>
<span class="c" style="left:210.82px;top:357px">{</span>
<span class="c" style="left:224.98px;top:364px">System.<em>out</em>.printf( <i>" %d"</i>, iter );</span>
<span class="c" style="left:210.82px;top:372px">}</span>
<span class="c" style="left:210.82px;top:395px">bCheck = arrInts.contains( <b>new</b> Integer( 7 ) );</span>
<span class="c" style="left:210.82px;top:403px">System.<em>out</em>.printf( <i>"\n7 exists? %s"</i>, bCheck ? <i>"Yes"</i> : <i>"No"</i> );</span>
<span class="c" style="left:210.82px;top:418px">bCheck = arrInts.contains( <b>new</b> Integer( 8 ) );</span>
<span class="c" style="left:210.82px;top:425px">System.<em>out</em>.printf( <i>"\n8 exists? %s"</i>, bCheck ? <i>"Yes"</i> : <i>"No"</i> );</span>
<span class="c" style="left:210.82px;top:441px">System.<em>out</em>.printf( <i>"\n Convert(Array)\n"</i> );</span>
<span class="c" style="left:210.82px;top:448px">Object[] tmpInts = arrInts.toArray();</span>
<span class="c" style="left:210.82px;top:464px"><b>for</b>( i = 0; i &lt; tmpInts.<u>length</u>; i++ )</span>
<span class="c" style="left:210.82px;top:471px">{</span>
<span class="c" style="left:224.98px;top:479px"><b>if</b>( tmpInts[ i ] <b>instanceof</b> Integer )</span>
<span class="c" style="left:224.98px;top:486px">{</span>
<div style="left:700.20px;top:59.00px;width:7.80px;height:434.00px;background:#f0f0f0"></div>
<svg style="left:702.20px;top:62.60px;" width="3.8" height="2.4" viewBox="0 0 8 5"><path d="M0 5l4-5 4 5z" fill="#444"/></svg>
<div style="left:700.60px;top:68.50px;width:7.00px;height:347.00px;background:linear-gradient(90deg,#f0f0f0,#dedede 50%,#cdcdcd);border:.5px solid #c4c4c4;border-radius:1.200px;box-sizing:border-box"></div>
<svg style="left:702.20px;top:491.60px;" width="3.8" height="1.4" viewBox="0 0 8 3"><path d="M0 0h8z" stroke="#333" stroke-width="2"/></svg>
<div style="left:720.80px;top:46.20px;width:15.60px;height:73.00px;background:#eff2fa;border-radius:3px;border:.5px solid #d3dbec;box-sizing:border-box"></div>
<div style="left:724.50px;top:48.20px;width:0.90px;height:0.80px;background:#b0a890"></div>
<div style="left:726.70px;top:48.20px;width:0.90px;height:0.80px;background:#b0a890"></div>
<div style="left:728.90px;top:48.20px;width:0.90px;height:0.80px;background:#b0a890"></div>
<div style="left:731.10px;top:48.20px;width:0.90px;height:0.80px;background:#b0a890"></div>
<svg style="left:725.60px;top:53.10px;" width="5.4" height="5.4" viewBox="0 0 16 16"><rect x="5" y="3" width="8" height="6" fill="#fff" stroke="#333" stroke-width="1.800"/><rect x="2" y="7" width="8" height="6" fill="#fff" stroke="#333" stroke-width="1.800"/></svg>
<svg style="left:724.45px;top:62.55px;" width="8.1" height="8.1" viewBox="0 0 16 16"><rect x="3" y="2" width="11" height="12" fill="#e6eefb" stroke="#7f9fd0"/><circle cx="8" cy="5.500" r="2.600" fill="#e0302a"/><path d="M1 15l3-6 3 6z" fill="#f0b030"/></svg>
<svg style="left:725.00px;top:74.30px;" width="7" height="7" viewBox="0 0 16 16"><circle cx="8" cy="8" r="6" fill="#a9c8f0" stroke="#5a8ad0" stroke-width="1.600"/><circle cx="8" cy="8" r="2.200" fill="#e6f0fc" stroke="#4a7ac8" stroke-width="1.300"/></svg>
<svg style="left:724.45px;top:85.05px;" width="8.1" height="8.1" viewBox="0 0 16 16"><path d="M3 1.500h7l3 3V14.500H3z" fill="#fdf7e0" stroke="#c09a3a"/><path d="M7 10h8M12.500 7.500L15 10l-2.500 2.500" fill="none" stroke="#e0a020" stroke-width="1.600"/><path d="M5 5h5M5 7.500h3" stroke="#6f8fd0"/></svg>
<svg style="left:724.45px;top:95.75px;" width="8.1" height="8.1" viewBox="0 0 16 16"><rect x="2" y="2" width="12" height="12" rx="1" fill="#4a78c8" stroke="#2a4f9a"/><rect x="4" y="4" width="8" height="7" fill="#eef4ff"/><rect x="5" y="5.500" width="4" height="2" fill="#3a4a6a"/></svg>
<svg style="left:724.20px;top:107.10px;" width="8.6" height="8.6" viewBox="0 0 16 16"><rect x="1" y="5" width="3" height="7" fill="#e03030"/><rect x="3" y="4" width="11" height="9" rx="2" fill="#6f9a1a" stroke="#2a3a0a"/><rect x="5.500" y="6" width="6" height="5" fill="#c8e86a"/></svg>
<div style="left:114.00px;top:102.00px;width:161.00px;height:337.00px;background:#f0f0f0;border:.6px solid #b0b0b0;box-sizing:border-box;box-shadow:1px 1px .8px rgba(0,0,0,.5)"></div>
<div style="left:130.40px;top:103.20px;width:0.50px;height:334.60px;background:#e2e3e3"></div>
<div style="left:130.90px;top:103.20px;width:0.50px;height:334.60px;background:#fff"></div>
<div style="left:115.40px;top:103.52px;width:158.20px;height:10.35px;background:linear-gradient(180deg,#f2f6fc,#dfe9f8);border:.6px solid #b5cdec;border-radius:1.500px;box-sizing:border-box"></div>
<span class="t" style="left:132.40px;top:104.70px;font-size:6.3px;color:#000;">New</span>
<svg style="left:266.60px;top:106.90px;" width="2.2" height="3.8" viewBox="0 0 4 7"><path d="M0 0l4 3.500L0 7z" fill="#111"/></svg>
<span class="t" style="left:132.40px;top:115.85px;font-size:6.3px;color:#000;">Go Into</span>
<div style="left:131.80px;top:127.12px;width:141.80px;height:0.50px;background:#e6e6e6"></div>
<div style="left:131.80px;top:127.62px;width:141.80px;height:0.50px;background:#fdfdfd"></div>
<span class="t" style="left:132.40px;top:131.20px;font-size:6.3px;color:#000;;letter-spacing:0.009px">Open in New Window</span>
<span class="t" style="left:132.40px;top:142.35px;font-size:6.3px;color:#000;">Open Type Hierarchy</span>
<span class="t" style="right:478.50px;top:142.35px;font-size:6.3px;color:#000;">F4</span>
<span class="t" style="left:132.40px;top:153.50px;font-size:6.3px;color:#000;">Show In</span>
<span class="t" style="right:478.50px;top:153.50px;font-size:6.3px;color:#000;;letter-spacing:0.214px">Alt+Shift+W</span>
<svg style="left:266.60px;top:155.70px;" width="2.2" height="3.8" viewBox="0 0 4 7"><path d="M0 0l4 3.500L0 7z" fill="#111"/></svg>
<div style="left:131.80px;top:164.78px;width:141.80px;height:0.50px;background:#e6e6e6"></div>
<div style="left:131.80px;top:165.28px;width:141.80px;height:0.50px;background:#fdfdfd"></div>
<span class="t" style="left:132.40px;top:168.85px;font-size:6.3px;color:#8a8a8a;">Copy</span>
<span class="t" style="right:478.50px;top:168.85px;font-size:6.3px;color:#8a8a8a;;letter-spacing:-0.072px">Ctrl+C</span>
<svg style="left:117.85px;top:169.20px;" width="8.1" height="8.1" viewBox="0 0 16 16"><path d="M2 1.500h6l2 2V11H2z" fill="#eceef2" stroke="#c5c9d0"/><path d="M6 5h6l2 2v7.500H6z" fill="#f4f5f8" stroke="#c5c9d0"/></svg>
<span class="t" style="left:132.40px;top:180.00px;font-size:6.3px;color:#000;;letter-spacing:-0.045px">Copy Qualified Name</span>
<svg style="left:117.85px;top:180.35px;" width="8.1" height="8.1" viewBox="0 0 16 16"><path d="M2 1.500h6l2 2V11H2z" fill="#f8e7a0" stroke="#7d8fb5"/><path d="M6 5h6l2 2v7.500H6z" fill="#dfe9fb" stroke="#4f6fb0"/><path d="M7.500 9h5M7.500 11.500h5" stroke="#4f6fb0"/></svg>
<span class="t" style="left:132.40px;top:191.15px;font-size:6.3px;color:#000;">Paste</span>
<span class="t" style="right:478.50px;top:191.15px;font-size:6.3px;color:#000;;letter-spacing:-0.012px">Ctrl+V</span>
<svg style="left:117.85px;top:191.50px;" width="8.1" height="8.1" viewBox="0 0 16 16"><rect x="2" y="3" width="10" height="12" rx="1" fill="#d9a84a" stroke="#8a6420"/><rect x="5" y="1.500" width="4" height="3" fill="#777"/><path d="M7 7h5l2 2v6H7z" fill="#eef3fc" stroke="#5f7fb8"/></svg>
<span class="t" style="left:132.40px;top:202.30px;font-size:6.3px;color:#000;">Delete</span>
<span class="t" style="right:478.50px;top:202.30px;font-size:6.3px;color:#000;;letter-spacing:-0.234px">Delete</span>
<svg style="left:117.85px;top:202.65px;" width="8.1" height="8.1" viewBox="0 0 16 16"><path d="M3 3l10 10M13 3L3 13" stroke="#e02430" stroke-width="3.600"/></svg>
<div style="left:131.80px;top:213.58px;width:141.80px;height:0.50px;background:#e6e6e6"></div>
<div style="left:131.80px;top:214.08px;width:141.80px;height:0.50px;background:#fdfdfd"></div>
<span class="t" style="left:132.40px;top:217.65px;font-size:6.3px;color:#000;">Build Path</span>
<svg style="left:266.60px;top:219.85px;" width="2.2" height="3.8" viewBox="0 0 4 7"><path d="M0 0l4 3.500L0 7z" fill="#111"/></svg>
<span class="t" style="left:132.40px;top:228.80px;font-size:6.3px;color:#000;">Source</span>
<span class="t" style="right:478.50px;top:228.80px;font-size:6.3px;color:#000;;letter-spacing:0.053px">Alt+Shift+S</span>
<svg style="left:266.60px;top:231.00px;" width="2.2" height="3.8" viewBox="0 0 4 7"><path d="M0 0l4 3.500L0 7z" fill="#111"/></svg>
<span class="t" style="left:132.40px;top:239.95px;font-size:6.3px;color:#000;">Refactor</span>
<span class="t" style="right:478.50px;top:239.95px;font-size:6.3px;color:#000;;letter-spacing:0.022px">Alt+Shift+T</span>
<svg style="left:266.60px;top:242.15px;" width="2.2" height="3.8" viewBox="0 0 4 7"><path d="M0 0l4 3.500L0 7z" fill="#111"/></svg>
<div style="left:131.80px;top:251.23px;width:141.80px;height:0.50px;background:#e6e6e6"></div>
<div style="left:131.80px;top:251.73px;width:141.80px;height:0.50px;background:#fdfdfd"></div>
<span class="t" style="left:132.40px;top:255.30px;font-size:6.3px;color:#000;">Import...</span>
<svg style="left:117.85px;top:255.65px;" width="8.1" height="8.1" viewBox="0 0 16 16"><path d="M1.500 9v5.500h13V9h-3l-1 2.500h-5L4.500 9z" fill="#dfeafc" stroke="#2f5fb0" stroke-width="1.300"/><path d="M4 2l5 1-1.500 1.500L10 7 8.500 8.500 6 6 4.500 7.500z" fill="#2f5fb0"/></svg>
<span class="t" style="left:132.40px;top:266.45px;font-size:6.3px;color:#000;">Export...</span>
<svg style="left:117.85px;top:266.80px;" width="8.1" height="8.1" viewBox="0 0 16 16"><path d="M1.500 9v5.500h13V9h-3l-1 2.500h-5L4.500 9z" fill="#dfeafc" stroke="#2f5fb0" stroke-width="1.300"/><path d="M14 1l-5 1 1.500 1.500L8 6l1.500 1.500L12 5l1.500 1.500z" fill="#2f5fb0"/></svg>
<div style="left:131.80px;top:277.73px;width:141.80px;height:0.50px;background:#e6e6e6"></div>
<div style="left:131.80px;top:278.23px;width:141.80px;height:0.50px;background:#fdfdfd"></div>
<span class="t" style="left:132.40px;top:281.80px;font-size:6.3px;color:#000;">References</span>
<svg style="left:266.60px;top:284.00px;" width="2.2" height="3.8" viewBox="0 0 4 7"><path d="M0 0l4 3.500L0 7z" fill="#111"/></svg>
<span class="t" style="left:132.40px;top:292.95px;font-size:6.3px;color:#000;">Declarations</span>
<svg style="left:266.60px;top:295.15px;" width="2.2" height="3.8" viewBox="0 0 4 7"><path d="M0 0l4 3.500L0 7z" fill="#111"/></svg>
<div style="left:131.80px;top:304.22px;width:141.80px;height:0.50px;background:#e6e6e6"></div>
<div style="left:131.80px;top:304.72px;width:141.80px;height:0.50px;background:#fdfdfd"></div>
<span class="t" style="left:132.40px;top:308.30px;font-size:6.3px;color:#000;">Refresh</span>
<span class="t" style="right:478.50px;top:308.30px;font-size:6.3px;color:#000;">F5</span>
<svg style="left:117.85px;top:308.65px;" width="8.1" height="8.1" viewBox="0 0 16 16"><path d="M2.500 7.500a5.500 5.500 0 0 1 9-3L13.500 2.500v5.500H8l2-2A3 3 0 0 0 5 7.500z" fill="#f8dc7a" stroke="#c8962a" stroke-width=".8"/><path d="M13.500 9a5.500 5.500 0 0 1-9 3L2.500 14V8.500H8l-2 2A3 3 0 0 0 11 9z" fill="#f8dc7a" stroke="#c8962a" stroke-width=".8"/></svg>
<span class="t" style="left:132.40px;top:319.45px;font-size:6.3px;color:#000;">Assign Working Sets...</span>
<div style="left:131.80px;top:330.72px;width:141.80px;height:0.50px;background:#e6e6e6"></div>
<div style="left:131.80px;top:331.22px;width:141.80px;height:0.50px;background:#fdfdfd"></div>
<span class="t" style="left:132.40px;top:334.80px;font-size:6.3px;color:#000;">Profile As</span>
<svg style="left:266.60px;top:337.00px;" width="2.2" height="3.8" viewBox="0 0 4 7"><path d="M0 0l4 3.500L0 7z" fill="#111"/></svg>
<span class="t" style="left:132.40px;top:345.95px;font-size:6.3px;color:#000;">Debug As</span>
<svg style="left:266.60px;top:348.15px;" width="2.2" height="3.8" viewBox="0 0 4 7"><path d="M0 0l4 3.500L0 7z" fill="#111"/></svg>
<span class="t" style="left:132.40px;top:357.10px;font-size:6.3px;color:#000;">Run As</span>
<svg style="left:266.60px;top:359.30px;" width="2.2" height="3.8" viewBox="0 0 4 7"><path d="M0 0l4 3.500L0 7z" fill="#111"/></svg>
<span class="t" style="left:132.40px;top:368.25px;font-size:6.3px;color:#000;">Validate</span>
<span class="t" style="left:132.40px;top:379.40px;font-size:6.3px;color:#000;">Team</span>
<svg style="left:266.60px;top:381.60px;" width="2.2" height="3.8" viewBox="0 0 4 7"><path d="M0 0l4 3.500L0 7z" fill="#111"/></svg>
<span class="t" style="left:132.40px;top:390.55px;font-size:6.3px;color:#000;;letter-spacing:-0.004px">Compare With</span>
<svg style="left:266.60px;top:392.75px;" width="2.2" height="3.8" viewBox="0 0 4 7"><path d="M0 0l4 3.500L0 7z" fill="#111"/></svg>
<span class="t" style="left:132.40px;top:401.70px;font-size:6.3px;color:#000;;letter-spacing:-0.077px">Restore from Local History...</span>
<span class="t" style="left:132.40px;top:412.85px;font-size:6.3px;color:#000;;letter-spacing:-0.018px">Translate Android Application</span>
<svg style="left:266.60px;top:415.05px;" width="2.2" height="3.8" viewBox="0 0 4 7"><path d="M0 0l4 3.500L0 7z" fill="#111"/></svg>
<div style="left:131.80px;top:424.12px;width:141.80px;height:0.50px;background:#e6e6e6"></div>
<div style="left:131.80px;top:424.62px;width:141.80px;height:0.50px;background:#fdfdfd"></div>
<span class="t" style="left:132.40px;top:428.20px;font-size:6.3px;color:#000;;letter-spacing:-0.130px">Properties</span>
<span class="t" style="right:478.50px;top:428.20px;font-size:6.3px;color:#000;;letter-spacing:-0.109px">Alt+Enter</span>
<div style="left:273.00px;top:102.00px;width:132.00px;height:205.00px;background:#f0f0f0;border:.6px solid #b0b0b0;box-sizing:border-box;box-shadow:1px 1px .8px rgba(0,0,0,.55)"></div>
<div style="left:287.90px;top:103.20px;width:0.50px;height:202.60px;background:#e2e3e3"></div>
<div style="left:288.40px;top:103.20px;width:0.50px;height:202.60px;background:#fff"></div>
<span class="t" style="left:290.00px;top:104.70px;font-size:6.3px;color:#000;;letter-spacing:-0.255px">Java Project</span>
<svg style="left:275.75px;top:104.75px;" width="8.1" height="8.1" viewBox="0 0 16 16"><path d="M1 6h5l1.500 1.500H13V14H1z" fill="#f3d27a" stroke="#9a7a2a"/><path d="M3 9.500h12l-2 5H1z" fill="#5f8fe0" stroke="#3d66a8"/><path d="M6 1v4a1.500 1.500 0 0 1-3 0" fill="none" stroke="#2f5fc0" stroke-width="1.600"/><path d="M12.800 .2l.9 1.900 2.100.3-1.500 1.500.4 2.100-1.900-1-1.900 1 .4-2.100-1.500-1.500 2.100-.3z" fill="#f9e58e" stroke="#c9a23a" stroke-width=".7"/></svg>
<span class="t" style="left:290.00px;top:115.90px;font-size:6.3px;color:#000;;letter-spacing:0.001px">Android Application Project</span>
<svg style="left:275.75px;top:115.95px;" width="8.1" height="8.1" viewBox="0 0 16 16"><path d="M1 6h5l1.500 1.500H13V14H1z" fill="#f3d27a" stroke="#9a7a2a"/><path d="M3 9.500h12l-2 5H1z" fill="#5f8fe0" stroke="#3d66a8"/><path d="M3 5a3 3 0 0 1 6 0z" fill="#7fb93f"/><path d="M12.800 .2l.9 1.900 2.100.3-1.500 1.500.4 2.100-1.900-1-1.900 1 .4-2.100-1.500-1.500 2.100-.3z" fill="#f9e58e" stroke="#c9a23a" stroke-width=".7"/></svg>
<span class="t" style="left:290.00px;top:127.10px;font-size:6.3px;color:#000;">Project...</span>
<svg style="left:275.75px;top:127.15px;" width="8.1" height="8.1" viewBox="0 0 16 16"><rect x="1.500" y="4" width="11" height="10" fill="#fffbe6" stroke="#5b79b5" stroke-width="1.300"/><rect x="1.500" y="4" width="11" height="2.600" fill="#4f86d8"/><path d="M12.800 .2l.9 1.900 2.100.3-1.500 1.500.4 2.100-1.900-1-1.900 1 .4-2.100-1.500-1.500 2.100-.3z" fill="#f9e58e" stroke="#c9a23a" stroke-width=".7"/></svg>
<div style="left:289.40px;top:138.25px;width:114.20px;height:0.50px;background:#e6e6e6"></div>
<div style="left:289.40px;top:138.75px;width:114.20px;height:0.50px;background:#fdfdfd"></div>
<span class="t" style="left:290.00px;top:142.20px;font-size:6.3px;color:#000;">Package</span>
<svg style="left:275.75px;top:142.25px;" width="8.1" height="8.1" viewBox="0 0 16 16"><rect x="2" y="4" width="10" height="10" fill="#fbe9c8" stroke="#a85f22" stroke-width="1.400"/><path d="M7 4v10M2 9h10" stroke="#a85f22" stroke-width="1.300"/><path d="M12.800 .2l.9 1.900 2.100.3-1.500 1.500.4 2.100-1.900-1-1.900 1 .4-2.100-1.500-1.500 2.100-.3z" fill="#f9e58e" stroke="#c9a23a" stroke-width=".7"/></svg>
<div style="left:274.40px;top:152.20px;width:129.20px;height:10.40px;background:linear-gradient(180deg,#f2f6fc,#dfe9f8);border:.6px solid #b5cdec;border-radius:1.500px;box-sizing:border-box"></div>
<span class="t" style="left:290.00px;top:153.40px;font-size:6.3px;color:#000;">Class</span>
<svg style="left:275.75px;top:153.45px;" width="8.1" height="8.1" viewBox="0 0 16 16"><circle cx="7" cy="9" r="6" fill="#36a148" stroke="#1f7a30"/><path d="M9.600 7a3 3 0 1 0 0 4" fill="none" stroke="#fff" stroke-width="1.800"/><path d="M12.800 .2l.9 1.900 2.100.3-1.500 1.500.4 2.100-1.900-1-1.900 1 .4-2.100-1.500-1.500 2.100-.3z" fill="#f9e58e" stroke="#c9a23a" stroke-width=".7"/></svg>
<span class="t" style="left:290.00px;top:164.60px;font-size:6.3px;color:#000;">Interface</span>
<svg style="left:275.75px;top:164.65px;" width="8.1" height="8.1" viewBox="0 0 16 16"><circle cx="7" cy="9" r="6" fill="#6a4fc0" stroke="#46308f"/><path d="M7 5.500v7M5.300 5.800h3.400M5.300 12.200h3.400" stroke="#fff" stroke-width="1.600"/><path d="M12.800 .2l.9 1.900 2.100.3-1.500 1.500.4 2.100-1.900-1-1.900 1 .4-2.100-1.500-1.500 2.100-.3z" fill="#f9e58e" stroke="#c9a23a" stroke-width=".7"/></svg>
<span class="t" style="left:290.00px;top:175.80px;font-size:6.3px;color:#000;">Enum</span>
<svg style="left:275.75px;top:175.85px;" width="8.1" height="8.1" viewBox="0 0 16 16"><circle cx="7" cy="9" r="6" fill="#a86a2a" stroke="#7a4a18"/><path d="M9.500 5.800H5.500v6.400h4M5.500 9h3.300" fill="none" stroke="#fff" stroke-width="1.500"/><path d="M12.800 .2l.9 1.900 2.100.3-1.500 1.500.4 2.100-1.900-1-1.900 1 .4-2.100-1.500-1.500 2.100-.3z" fill="#f9e58e" stroke="#c9a23a" stroke-width=".7"/></svg>
<span class="t" style="left:290.00px;top:187.00px;font-size:6.3px;color:#000;;letter-spacing:-0.052px">Annotation</span>
<svg style="left:275.75px;top:187.05px;" width="8.1" height="8.1" viewBox="0 0 16 16"><circle cx="7" cy="9" r="5.600" fill="none" stroke="#3f86d0" stroke-width="1.600"/><circle cx="7" cy="9" r="2.200" fill="none" stroke="#3f86d0" stroke-width="1.400"/><path d="M9.200 7v3.500c0 1 2 1 3-1" fill="none" stroke="#3f86d0" stroke-width="1.200"/><path d="M12.800 .2l.9 1.900 2.100.3-1.500 1.500.4 2.100-1.900-1-1.900 1 .4-2.100-1.500-1.500 2.100-.3z" fill="#f9e58e" stroke="#c9a23a" stroke-width=".7"/></svg>
<span class="t" style="left:290.00px;top:198.20px;font-size:6.3px;color:#000;;letter-spacing:-0.166px">Source Folder</span>
<svg style="left:275.75px;top:198.25px;" width="8.1" height="8.1" viewBox="0 0 16 16"><path d="M1 5h5l1.500 1.500H14V14H1z" fill="#e9c06a" stroke="#9a7a3a"/><rect x="2" y="9" width="6" height="5" fill="#c98a4a" stroke="#8a4f1a"/><path d="M12.800 .2l.9 1.900 2.100.3-1.500 1.500.4 2.100-1.900-1-1.900 1 .4-2.100-1.500-1.500 2.100-.3z" fill="#f9e58e" stroke="#c9a23a" stroke-width=".7"/></svg>
<span class="t" style="left:290.00px;top:209.40px;font-size:6.3px;color:#000;;letter-spacing:-0.165px">Java Working Set</span>
<svg style="left:275.75px;top:209.45px;" width="8.1" height="8.1" viewBox="0 0 16 16"><path d="M4 8h5l1 1.500H15V15H4z" fill="#f3cf6a" stroke="#a8812a"/><path d="M5 1v5a1.700 1.700 0 0 1-3.400 0" fill="none" stroke="#2f5fc0" stroke-width="1.800"/><circle cx="11" cy="4.500" r="2.800" fill="#f3b33c"/></svg>
<span class="t" style="left:290.00px;top:220.60px;font-size:6.3px;color:#000;">Folder</span>
<svg style="left:275.75px;top:220.65px;" width="8.1" height="8.1" viewBox="0 0 16 16"><path d="M1 5h5l1.500 1.500H14V14H1z" fill="#f6d56f" stroke="#b08a2a"/><path d="M12.800 .2l.9 1.900 2.100.3-1.500 1.500.4 2.100-1.900-1-1.900 1 .4-2.100-1.500-1.500 2.100-.3z" fill="#f9e58e" stroke="#c9a23a" stroke-width=".7"/></svg>
<span class="t" style="left:290.00px;top:231.80px;font-size:6.3px;color:#000;">File</span>
<svg style="left:275.75px;top:231.85px;" width="8.1" height="8.1" viewBox="0 0 16 16"><path d="M3 2.500h7l3 3V15H3z" fill="#fcfcfc" stroke="#a9a99a"/><path d="M12.800 .2l.9 1.900 2.100.3-1.500 1.500.4 2.100-1.900-1-1.900 1 .4-2.100-1.500-1.500 2.100-.3z" fill="#f9e58e" stroke="#c9a23a" stroke-width=".7"/></svg>
<span class="t" style="left:290.00px;top:243.00px;font-size:6.3px;color:#000;;letter-spacing:-0.047px">Untitled Text File</span>
<svg style="left:275.75px;top:243.05px;" width="8.1" height="8.1" viewBox="0 0 16 16"><path d="M3 2.500h7l3 3V15H3z" fill="#e8eef8" stroke="#8f9fb8"/><path d="M5 7h6M5 9.500h6M5 12h6" stroke="#7f93b8"/><path d="M12.800 .2l.9 1.900 2.100.3-1.500 1.500.4 2.100-1.900-1-1.900 1 .4-2.100-1.500-1.500 2.100-.3z" fill="#f9e58e" stroke="#c9a23a" stroke-width=".7"/></svg>
<span class="t" style="left:290.00px;top:254.20px;font-size:6.3px;color:#000;;letter-spacing:-0.067px">Android XML File</span>
<svg style="left:275.75px;top:254.25px;" width="8.1" height="8.1" viewBox="0 0 16 16"><path d="M3 2.500h7l3 3V15H3z" fill="#fff" stroke="#a9a99a"/><rect x="5" y="8" width="6" height="6" fill="#5fae3f"/><rect x="6.500" y="9.500" width="3" height="3" fill="#fff"/><path d="M12.800 .2l.9 1.900 2.100.3-1.500 1.500.4 2.100-1.900-1-1.900 1 .4-2.100-1.500-1.500 2.100-.3z" fill="#f9e58e" stroke="#c9a23a" stroke-width=".7"/></svg>
<span class="t" style="left:290.00px;top:265.40px;font-size:6.3px;color:#000;;letter-spacing:-0.226px">JUnit Test Case</span>
<svg style="left:275.75px;top:265.45px;" width="8.1" height="8.1" viewBox="0 0 16 16"><path d="M2 3h8l3 3v9H2z" fill="#dff0d4" stroke="#6f9a5a"/><rect x="4" y="8" width="6" height="5" fill="#5fae3f"/><path d="M12.800 .2l.9 1.900 2.100.3-1.500 1.500.4 2.100-1.900-1-1.900 1 .4-2.100-1.500-1.500 2.100-.3z" fill="#f9e58e" stroke="#c9a23a" stroke-width=".7"/></svg>
<div style="left:289.40px;top:276.55px;width:114.20px;height:0.50px;background:#e6e6e6"></div>
<div style="left:289.40px;top:277.05px;width:114.20px;height:0.50px;background:#fdfdfd"></div>
<span class="t" style="left:290.00px;top:280.50px;font-size:6.3px;color:#000;">Example...</span>
<svg style="left:275.75px;top:280.55px;" width="8.1" height="8.1" viewBox="0 0 16 16"><rect x="1.500" y="4" width="11" height="10" fill="#fffbe6" stroke="#5b79b5" stroke-width="1.300"/><rect x="1.500" y="4" width="11" height="2.600" fill="#4f86d8"/><path d="M12.800 .2l.9 1.900 2.100.3-1.500 1.500.4 2.100-1.900-1-1.900 1 .4-2.100-1.500-1.500 2.100-.3z" fill="#f9e58e" stroke="#c9a23a" stroke-width=".7"/></svg>
<div style="left:289.40px;top:291.65px;width:114.20px;height:0.50px;background:#e6e6e6"></div>
<div style="left:289.40px;top:292.15px;width:114.20px;height:0.50px;background:#fdfdfd"></div>
<span class="t" style="left:290.00px;top:295.60px;font-size:6.3px;color:#000;">Other...</span>
<span class="t" style="right:348.60px;top:295.60px;font-size:6.3px;color:#000;;letter-spacing:0.045px">Ctrl+N</span>
<svg style="left:275.75px;top:295.65px;" width="8.1" height="8.1" viewBox="0 0 16 16"><rect x="1.500" y="4" width="11" height="10" fill="#fffbe6" stroke="#5b79b5" stroke-width="1.300"/><rect x="1.500" y="4" width="11" height="2.600" fill="#4f86d8"/><path d="M12.800 .2l.9 1.900 2.100.3-1.500 1.500.4 2.100-1.900-1-1.900 1 .4-2.100-1.500-1.500 2.100-.3z" fill="#f9e58e" stroke="#c9a23a" stroke-width=".7"/></svg>
<div style="left:43.90px;top:78.00px;width:80.40px;height:12.00px;border:2.0px solid #e8141c;box-sizing:border-box"></div>
<div style="left:68.20px;top:95.10px;width:208.70px;height:21.50px;border:2.2px solid #e8141c;box-sizing:border-box"></div>
<div style="left:268.50px;top:148.80px;width:140.50px;height:18.00px;border:3.0px solid #e8141c;box-sizing:border-box"></div>
</div></body></html>
